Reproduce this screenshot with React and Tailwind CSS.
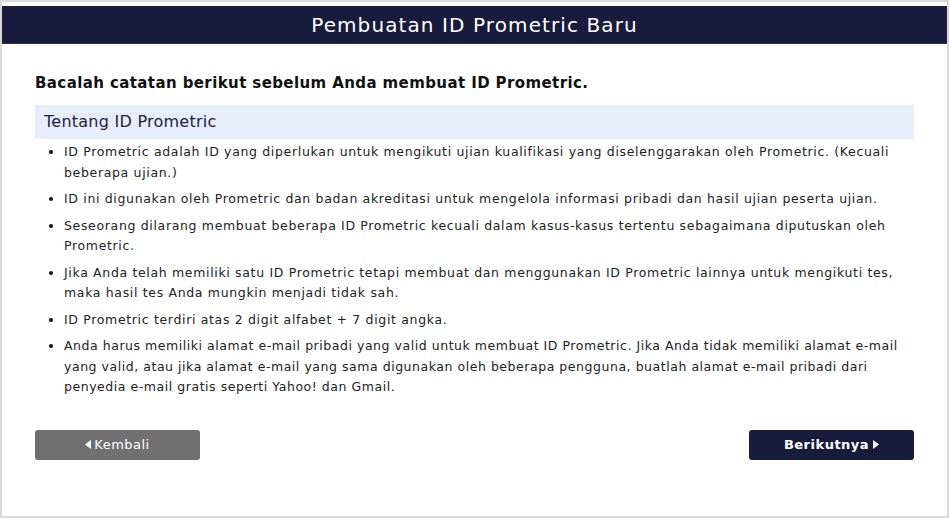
import { useState } from "react";

const notes = [
  { text: "ID Prometric adalah ID yang diperlukan untuk mengikuti ujian kualifikasi yang diselenggarakan oleh Prometric. (Kecuali beberapa ujian.)" },
  { text: "ID ini digunakan oleh Prometric dan badan akreditasi untuk mengelola informasi pribadi dan hasil ujian peserta ujian." },
  { text: "Seseorang dilarang membuat beberapa ID Prometric kecuali dalam kasus-kasus tertentu sebagaimana diputuskan oleh Prometric." },
  { text: "Jika Anda telah memiliki satu ID Prometric tetapi membuat dan menggunakan ID Prometric lainnya untuk mengikuti tes, maka hasil tes Anda mungkin menjadi tidak sah." },
  { text: "ID Prometric terdiri atas 2 digit alfabet + 7 digit angka." },
  {
    text: "Anda harus memiliki alamat e-mail pribadi yang valid untuk membuat ID Prometric. Jika Anda tidak memiliki alamat e-mail yang valid, atau jika alamat e-mail yang sama digunakan oleh beberapa pengguna, buatlah alamat e-mail pribadi dari penyedia e-mail gratis seperti Yahoo! dan Gmail.",
    cls: "tracking-[0.54px]",
  },
];

export default function App() {
  const [step, setStep] = useState(0);

  return (
    <div className="w-[949px] h-[518px] bg-white border-2 border-[#d9d9d9] pt-[4px] font-['DejaVu_Sans',Verdana,sans-serif] text-[#222]">
      {/* Title bar */}
      <div className="h-[38px] bg-[#181b3c] border-b border-[#2e3150] flex items-center justify-center">
        <h1 className="text-white text-[20px] font-normal tracking-[1.1px]">Pembuatan ID Prometric Baru</h1>
      </div>

      <div className="px-[33px] pt-[29px]">
        <p className="font-bold text-[15px] tracking-[0.4px] text-[#111] leading-[20px]">
          Bacalah catatan berikut sebelum Anda membuat ID Prometric.
        </p>

        {/* Notes */}
        <div className="mt-[12px]">
          <div className="h-[34px] bg-[#e8edfb] flex items-center px-[9px]">
            <h2 className="text-[16px] tracking-[0.25px] text-[#1f2340] font-normal">Tentang ID Prometric</h2>
          </div>
          <ul className="list-disc pl-[29px] pr-[6px] mt-[3px] text-[12.5px] tracking-[0.66px] leading-[20.5px] space-y-[6px] text-[#222]">
            {notes.map((n, i) => (
              <li key={i} className={`marker:text-[#111] ${n.cls ?? ""}`}>{n.text}</li>
            ))}
          </ul>
        </div>

        {/* Buttons */}
        <div className="mt-[32px] flex items-center justify-between">
          <button
            onClick={() => setStep(step - 1)}
            className="w-[165px] h-[30px] rounded-[3px] bg-[#707070] text-white text-[13px] tracking-[0.5px] flex items-center justify-center gap-[3px]"
          >
            <svg width="6" height="9" viewBox="0 0 6 9"><path d="M6 0 L0 4.5 L6 9 Z" fill="white" /></svg>
            Kembali
          </button>
          <button
            onClick={() => setStep(step + 1)}
            className="w-[165px] h-[30px] rounded-[3px] bg-[#181b3c] text-white text-[13px] tracking-[0.5px] font-bold flex items-center justify-center gap-[4px]"
          >
            Berikutnya
            <svg width="6" height="9" viewBox="0 0 6 9"><path d="M0 0 L6 4.5 L0 9 Z" fill="white" /></svg>
          </button>
        </div>
      </div>
    </div>
  );
}
